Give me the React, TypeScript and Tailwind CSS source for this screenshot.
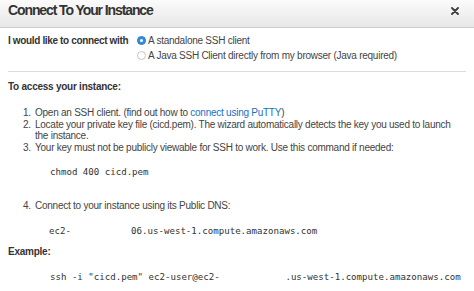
import React from "react";

const Radio = ({ checked }: { checked?: boolean }) =>
  checked ? (
    <span className="w-[9px] h-[9px] rounded-full bg-[#2f8ee0] border border-[#2a7cc8] flex items-center justify-center shrink-0">
      <span className="w-[3px] h-[3px] rounded-full bg-white" />
    </span>
  ) : (
    <span className="w-[9px] h-[9px] rounded-full bg-white border border-[#c4c4c4] shrink-0" />
  );

const Step = ({ n, children }: { n: string; children: React.ReactNode }) => (
  <div className="flex pl-[23px] pr-[8px]">
    <span className="w-[12px] shrink-0">{n}</span>
    <span className="flex-1">{children}</span>
  </div>
);

const App = () => {
  return (
    <div className="w-[474px] h-[291px] overflow-hidden bg-white text-[#444] font-['Liberation_Sans',Arial,sans-serif] text-[10px] tracking-[-0.25px]">
      <div className="h-[28px] flex justify-between items-start px-2 bg-gradient-to-b from-[#fbfbfb] to-[#e7e7e7] border-b border-[#cdcdcd]">
        <h1 className="font-bold text-[#333] text-[14px] leading-[20px] tracking-[-1.1px]">
          Connect To Your Instance
        </h1>
        <svg width="8" height="8" viewBox="0 0 8 8" className="mt-[7px] mr-[7px]">
          <path d="M1 1L7 7M7 1L1 7" stroke="#3a3a3a" strokeWidth="1.8" strokeLinecap="round" />
        </svg>
      </div>

      <div className="flex px-2 mt-[5px]">
        <div className="w-[129px] font-bold text-[#333] leading-[15px] tracking-[-0.35px]">I would like to connect with</div>
        <div className="flex flex-col">
          <label className="flex items-center gap-[2px] h-[15px]">
            <Radio checked />
            <span>A standalone SSH client</span>
          </label>
          <label className="flex items-center gap-[2px] h-[15px]">
            <Radio />
            <span>A Java SSH Client directly from my browser (Java required)</span>
          </label>
        </div>
      </div>

      <div className="mx-2 mt-[8px] border-t border-[#dcdcdc]" />

      <div className="px-2 mt-[9px] font-bold text-[#333] leading-[12px]">To access your instance:</div>

      <div className="mt-[14px] flex flex-col gap-[1px] leading-[11px]">
        <Step n="1.">
          Open an SSH client. (find out how to <span className="text-[#1a6fc4]">connect using PuTTY</span>)
        </Step>
        <Step n="2.">
          Locate your private key file (cicd.pem). The wizard automatically detects the key you used to launch the
          instance.
        </Step>
        <Step n="3.">Your key must not be publicly viewable for SSH to work. Use this command if needed:</Step>
      </div>

      <div className="pl-[50px] mt-[13px] font-['DejaVu_Sans_Mono',monospace] text-[9.1px] tracking-normal leading-[12px] text-[#333] whitespace-pre">
        chmod 400 cicd.pem
      </div>

      <div className="mt-[22px] leading-[11px]">
        <Step n="4.">Connect to your instance using its Public DNS:</Step>
      </div>

      <div className="pl-[49px] mt-[14px] font-['DejaVu_Sans_Mono',monospace] text-[9.1px] tracking-normal leading-[12px] text-[#333] whitespace-pre">
        {"ec2-           06.us-west-1.compute.amazonaws.com"}
      </div>

      <div className="px-2 mt-[9px] font-bold text-[#333] leading-[12px]">Example:</div>

      <div className="pl-[50px] mt-[13px] font-['DejaVu_Sans_Mono',monospace] text-[9.1px] tracking-normal leading-[12px] text-[#333] whitespace-pre">
        {'ssh -i "cicd.pem" ec2-user@ec2-            .us-west-1.compute.amazonaws.com'}
      </div>
    </div>
  );
};

export default App;
